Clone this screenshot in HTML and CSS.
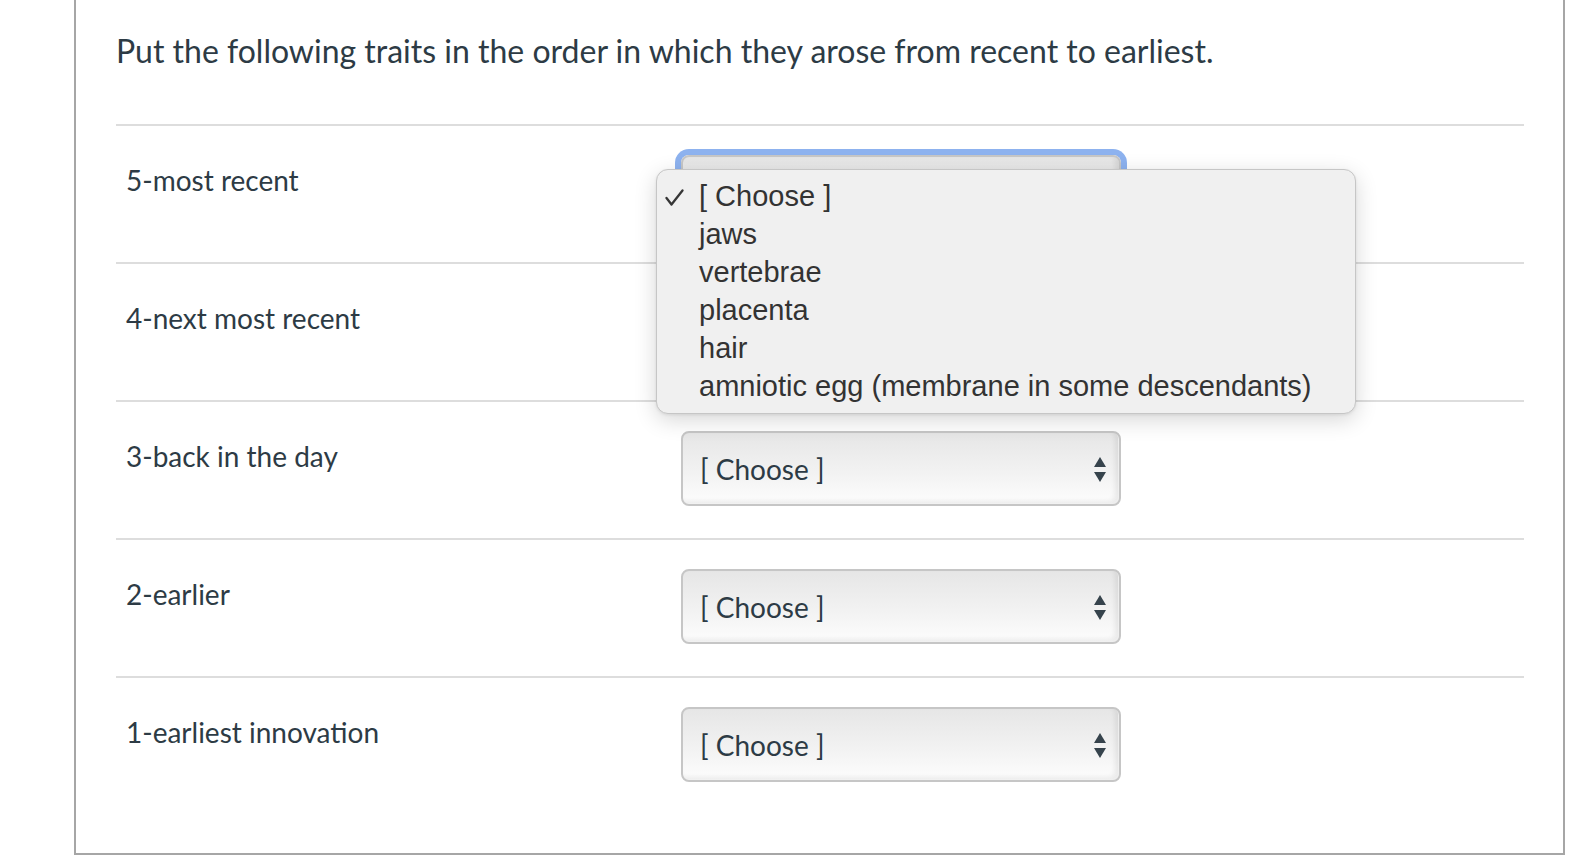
FILE: index.html
```html
<!DOCTYPE html>
<html lang="en">
<head>
<meta charset="utf-8">
<title>Quiz question</title>
<link rel="stylesheet" href="styles.css">
</head>
<body>
<div class="card">
  <p class="title">Put the following traits in the order in which they arose from recent to earliest.</p>
  <div class="rows">
    <div class="row">
      <div class="label">5-most recent</div>
      <div class="select focused"><span class="sel-text">[ Choose ]</span><span class="arrows"><i class="up"></i><i class="down"></i></span></div>
    </div>
    <div class="row">
      <div class="label">4-next most recent</div>
      <div class="select"><span class="sel-text">[ Choose ]</span><span class="arrows"><i class="up"></i><i class="down"></i></span></div>
    </div>
    <div class="row">
      <div class="label">3-back in the day</div>
      <div class="select"><span class="sel-text">[ Choose ]</span><span class="arrows"><i class="up"></i><i class="down"></i></span></div>
    </div>
    <div class="row">
      <div class="label">2-earlier</div>
      <div class="select"><span class="sel-text">[ Choose ]</span><span class="arrows"><i class="up"></i><i class="down"></i></span></div>
    </div>
    <div class="row">
      <div class="label">1-earliest innovation</div>
      <div class="select"><span class="sel-text">[ Choose ]</span><span class="arrows"><i class="up"></i><i class="down"></i></span></div>
    </div>
  </div>
</div>
<ul class="menu">
  <li class="opt checked"><svg class="check" width="19" height="17" viewBox="0 0 19 17"><polyline points="1.5,9 6.5,15.5 17.5,1.5" fill="none" stroke="#363636" stroke-width="2.3" stroke-linecap="round" stroke-linejoin="round"/></svg>[ Choose ]</li>
  <li class="opt">jaws</li>
  <li class="opt">vertebrae</li>
  <li class="opt">placenta</li>
  <li class="opt">hair</li>
  <li class="opt">amniotic egg (membrane in some descendants)</li>
</ul>
</body>
</html>
```
FILE: styles.css
```css
html, body {
  margin: 0;
  padding: 0;
  background: #ffffff;
}
body {
  font-family: Lato, "Noto Sans", sans-serif;
  color: #2d3b45;
  width: 1580px;
  height: 858px;
  overflow: hidden;
  position: relative;
}
.card {
  box-sizing: border-box;
  margin-left: 74px;
  width: 1491px;
  height: 855px;
  border: 2px solid #a6a6a6;
  border-top: none;
  padding: 32px 39px 0 40px;
}
.title {
  margin: 0;
  font-size: 32px;
  line-height: 38px;
}
.rows {
  margin-top: 54px;
}
.row {
  box-sizing: border-box;
  height: 138px;
  border-top: 2px solid #dddddd;
  display: grid;
  grid-template-columns: 565px 440px;
  align-items: start;
}
.label {
  padding: 37px 0 0 10px;
  font-size: 28px;
  line-height: 34px;
}
.select {
  box-sizing: border-box;
  margin-top: 29px;
  height: 75px;
  border: 2px solid #c6c6c6;
  border-radius: 8px;
  background: linear-gradient(#e6e6e6, #f3f3f3 60%, #fdfdfd);
  box-shadow: inset -4px -3px 5px rgba(0, 0, 0, 0.07), inset -1px -1px 0 rgba(255, 255, 255, 0.9);
  display: flex;
  align-items: center;
  justify-content: space-between;
  padding: 0 13px 0 17px;
}
.select.focused {
  box-shadow: inset -4px -3px 5px rgba(0, 0, 0, 0.07), 0 0 0 6px #8db2ef;
}
.sel-text {
  font-size: 28px;
  line-height: 34px;
}
.arrows {
  display: flex;
  flex-direction: column;
  gap: 5px;
  margin-top: 2px;
}
.arrows i {
  display: block;
  width: 0;
  height: 0;
  border-left: 6.5px solid transparent;
  border-right: 6.5px solid transparent;
}
.arrows .up {
  border-bottom: 10px solid #36434c;
}
.arrows .down {
  border-top: 10px solid #36434c;
}
.menu {
  position: absolute;
  left: 656px;
  top: 169px;
  box-sizing: border-box;
  width: 700px;
  height: 245px;
  margin: 0;
  padding: 7px 0 0 42px;
  list-style: none;
  background: #f0f0f0;
  border: 1px solid #c6c6c6;
  border-radius: 12px;
  box-shadow: 0 6px 22px rgba(0, 0, 0, 0.16), 0 1px 3px rgba(0, 0, 0, 0.08);
  font-family: "Liberation Sans", Arial, sans-serif;
  font-size: 29px;
  color: #333333;
}
.opt {
  height: 38px;
  line-height: 38px;
  position: relative;
  white-space: nowrap;
}
.check {
  position: absolute;
  left: -34px;
  top: 12px;
}
```
